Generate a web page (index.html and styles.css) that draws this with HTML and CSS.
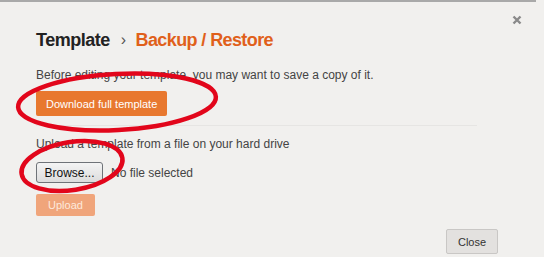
FILE: index.html
```html
<!DOCTYPE html>
<html>
<head>
<meta charset="utf-8">
<link rel="stylesheet" href="styles.css">
</head>
<body>
<div class="dialog">
  <button class="close-x" aria-label="Close">
    <svg width="10" height="10" viewBox="0 0 10 10"><path d="M1.5 1.5 L8.5 8.5 M8.5 1.5 L1.5 8.5" stroke="#8a8a8a" stroke-width="2.4" stroke-linecap="butt"/></svg>
  </button>
  <h1 class="title"><span>Template</span><span class="sep">&#x203A;</span><span class="accent">Backup / Restore</span></h1>
  <section class="block block-top">
    <p class="note">Before editing your template, you may want to save a copy of it.</p>
    <button class="btn btn-orange">Download full template</button>
  </section>
  <div class="divider"></div>
  <section class="block">
    <p class="note">Upload a template from a file on your hard drive</p>
    <div class="file-row">
      <span class="browse">Browse...</span>
      <span class="file-status">No file selected</span>
    </div>
    <button class="btn btn-orange btn-disabled">Upload</button>
  </section>
  <footer class="footer">
    <button class="btn-close">Close</button>
  </footer>
  <svg class="marks" width="544" height="257" viewBox="0 0 544 257">
    <ellipse cx="117" cy="102" rx="99" ry="28" transform="rotate(-3 117 102)" fill="none" stroke="#e2061b" stroke-width="4.5"/>
    <ellipse cx="72" cy="166" rx="51" ry="24" transform="rotate(-9 72 166)" fill="none" stroke="#e2061b" stroke-width="4.5"/>
  </svg>
</div>
</body>
</html>
```
FILE: styles.css
```css
html, body {
  margin: 0;
  padding: 0;
  background: #f1f0ee;
}
body {
  font-family: "Liberation Sans", Arial, sans-serif;
  color: #333;
  width: 544px;
  height: 257px;
  overflow: hidden;
}
.dialog {
  position: relative;
  width: 544px;
  height: 257px;
  box-sizing: border-box;
  padding: 29px 0 0 36px;
  display: flex;
  flex-direction: column;
  align-items: flex-start;
}
.dialog::before {
  content: "";
  position: absolute;
  left: 0;
  top: 0;
  width: 536px;
  height: 2px;
  background: #a9a9a9;
}
.close-x {
  position: absolute;
  top: 15px;
  left: 512px;
  border: 0;
  background: none;
  padding: 0;
  line-height: 0;
}
.title {
  margin: 0;
  font-size: 18px;
  line-height: 22px;
  font-weight: bold;
  color: #222;
  display: flex;
  letter-spacing: -0.5px;
}
.title .sep {
  font-weight: normal;
  font-size: 16px;
  color: #555;
  margin: 0 10px 0 11px;
}
.title .accent {
  color: #e0601a;
  letter-spacing: -0.6px;
}
.block {
  display: flex;
  flex-direction: column;
  align-items: flex-start;
}
.block-top {
  margin-top: 16px;
}
.note {
  margin: 0;
  font-size: 12px;
  line-height: 16px;
  color: #444;
}
.btn {
  font-family: "Liberation Sans", Arial, sans-serif;
  border: 0;
  border-radius: 2px;
  cursor: pointer;
}
.btn-orange {
  margin-top: 8px;
  height: 25px;
  padding: 0 10px;
  background: #e8782f;
  color: #fff;
  font-size: 11px;
}
.btn-disabled {
  margin-top: 11px;
  height: 22px;
  width: 59px;
  padding: 0;
  background: #f0a57b;
  color: #fde9dc;
}
.divider {
  margin-top: 9px;
  width: 441px;
  height: 1px;
  background: #e6e5e3;
}
.divider + .block {
  margin-top: 10px;
}
.file-row {
  margin-top: 10px;
  display: flex;
  align-items: center;
  gap: 8px;
  font-size: 12px;
}
.browse {
  box-sizing: border-box;
  width: 67px;
  height: 21px;
  display: flex;
  align-items: center;
  justify-content: center;
  border: 1px solid #6f7378;
  border-radius: 3px;
  background: linear-gradient(#f4f4f4, #dcdcdc);
  color: #111;
  font-size: 12px;
}
.file-status {
  color: #444;
}
.footer {
  align-self: flex-end;
  margin-top: 13px;
  margin-right: 46px;
}
.btn-close {
  box-sizing: border-box;
  width: 52px;
  height: 25px;
  border: 1px solid #c9c7c5;
  border-radius: 2px;
  background: #e3e1df;
  color: #333;
  font: 11px "Liberation Sans", Arial, sans-serif;
}
.marks {
  position: absolute;
  left: 0;
  top: 0;
  pointer-events: none;
}
```
